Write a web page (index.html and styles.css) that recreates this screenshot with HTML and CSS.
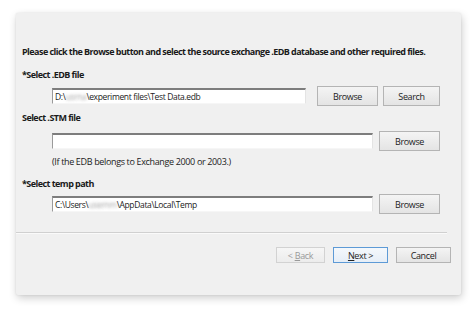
FILE: index.html
```html
<!DOCTYPE html>
<html>
<head>
<meta charset="utf-8">
<link rel="stylesheet" href="styles.css">
</head>
<body>
<div class="panel">
  <div class="body">
    <div class="heading">Please click the Browse button and select the source exchange .EDB database and other required files.</div>
    <div class="label l1">*Select .EDB file</div>
    <div class="row r1">
      <div class="field w1">D:\<span class="blur">usrna</span>\experiment files\Test Data.edb</div>
      <button class="btn browse1">Browse</button>
      <button class="btn search">Search</button>
    </div>
    <div class="label l2">Select .STM file</div>
    <div class="row r2">
      <div class="field w2"></div>
      <button class="btn browse">Browse</button>
    </div>
    <div class="note">(If the EDB belongs to Exchange 2000 or 2003.)</div>
    <div class="label l3">*Select temp path</div>
    <div class="row r3">
      <div class="field w2">C:\Users\<span class="blur">usernm</span>\AppData\Local\Temp</div>
      <button class="btn browse">Browse</button>
    </div>
  </div>
  <div class="sep"></div>
  <div class="footer">
    <button class="btn small back">&lt; <u>B</u>ack</button>
    <button class="btn small next"><u>N</u>ext &gt;</button>
    <button class="btn small cancel">Cancel</button>
  </div>
</div>
</body>
</html>
```
FILE: styles.css
```css
html, body {
  margin: 0;
  padding: 0;
  background: #ffffff;
}
body {
  width: 474px;
  height: 310px;
  overflow: hidden;
  font-family: "Open Sans", "DejaVu Sans", sans-serif;
  font-size: 9px;
  letter-spacing: -0.35px;
  color: #1a1a1a;
}
.panel {
  margin: 13px 13px 0 16px;
  width: 445px;
  height: 282px;
  background: #f0f0f0;
  box-shadow: 1px 3px 8px rgba(0,0,0,0.2), 0 0 2px rgba(0,0,0,0.1);
  border-radius: 2px;
  display: flex;
  flex-direction: column;
}
.body {
  padding: 33px 0 0 6px;
}
.heading, .label {
  font-weight: bold;
  letter-spacing: -0.55px;
  line-height: 12px;
  height: 12px;
  white-space: nowrap;
}
.l1 { margin-top: 11px; }
.l2 { margin-top: 6px; }
.l3 { margin-top: 10px; }
.row {
  display: flex;
  align-items: center;
  height: 20px;
  margin-left: 30px;
}
.r1 { margin-top: 5px; }
.r2 { margin-top: 7px; }
.r3 { margin-top: 4px; }
.field {
  box-sizing: border-box;
  height: 16px;
  background: #ffffff;
  border-top: 2px solid #7d7d7d;
  border-left: 1px solid #9a9a9a;
  border-right: 1px solid #e4e4e4;
  border-bottom: 1px solid #f6f6f6;
  padding: 0 0 0 2px;
  line-height: 13px;
  font-size: 8.5px;
  white-space: nowrap;
  overflow: hidden;
  color: #222;
}
.w1 { width: 254px; margin-right: 11px; }
.w2 { width: 321px; margin-right: 6px; }
.blur {
  color: transparent;
  text-shadow: 0 0 3px rgba(80,80,80,0.5);
}
.btn {
  box-sizing: border-box;
  height: 20px;
  width: 61px;
  padding: 0;
  margin: 0;
  font-family: inherit;
  font-size: 9px;
  letter-spacing: -0.35px;
  color: #222;
  background: linear-gradient(#f4f4f4, #e4e4e4);
  border: 1px solid #b4b4b4;
  border-radius: 0;
}
.search { width: 57px; margin-left: 5px; }
.note {
  margin: 5px 0 0 30px;
  line-height: 12px;
  height: 12px;
  color: #222;
}
.sep {
  margin-top: 18px;
  width: 431px;
  height: 1px;
  background: #d0d0d0;
  border-bottom: 1px solid #fafafa;
}
.footer {
  display: flex;
  justify-content: flex-end;
  margin-top: 13px;
  padding-right: 10px;
  gap: 8px;
}
.small {
  height: 16px;
  width: 55px;
}
.back {
  width: 49px;
  color: #9a9a9a;
  border-color: #d2d2d2;
  background: linear-gradient(#f6f6f6, #ececec);
}
.next {
  border-color: #5d9ad6;
  background: linear-gradient(#f4f8fc, #e6eef7);
}
```
